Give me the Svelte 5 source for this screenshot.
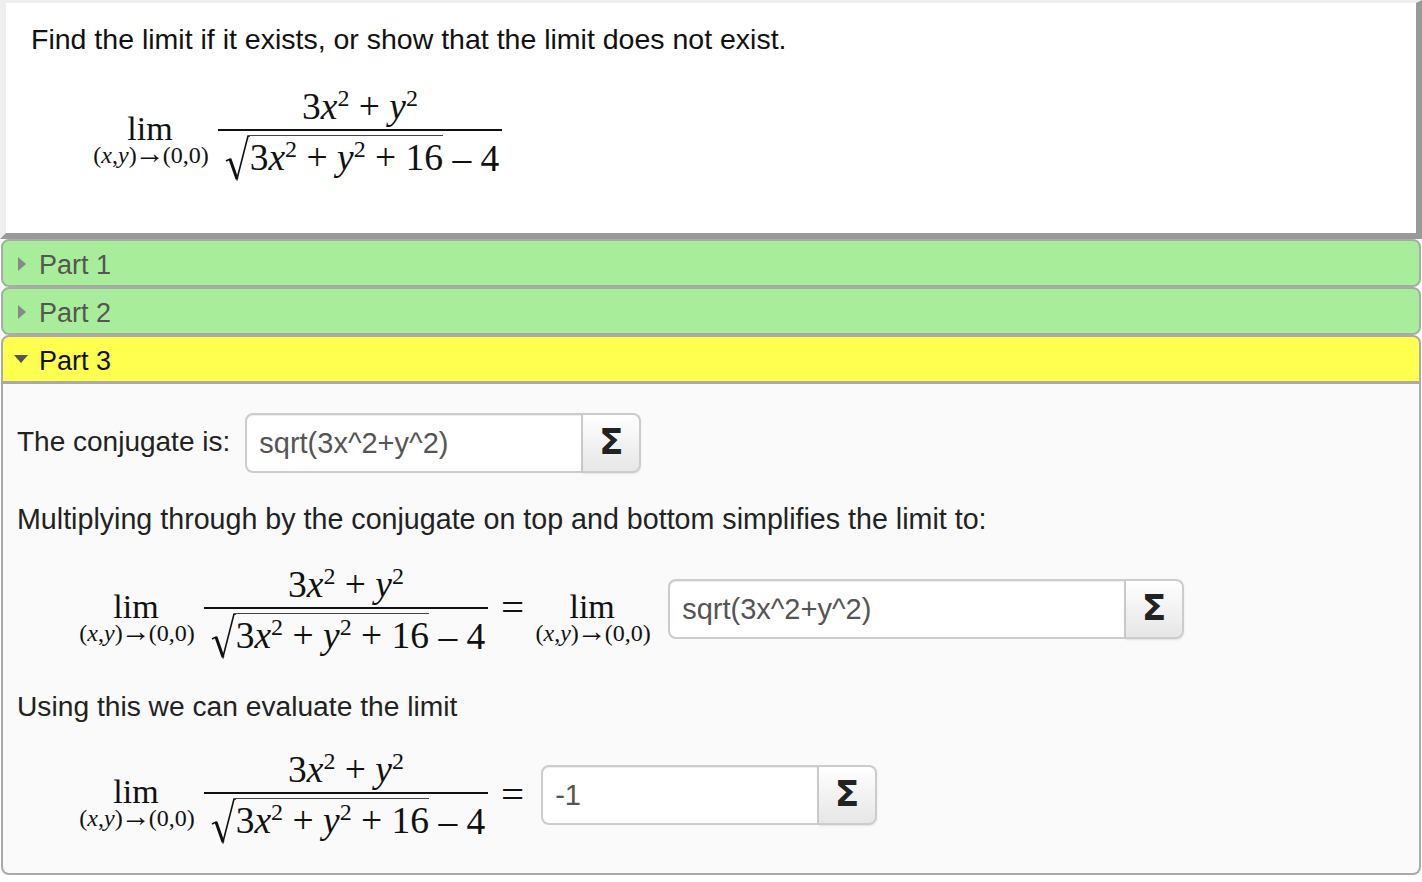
<script>
  // Homework question: a limit problem with collapsible parts, Part 3 is open.
  let parts = [
    { name: 'Part 1', state: 'done' },
    { name: 'Part 2', state: 'done' },
  ]
  let conjugate = $state('sqrt(3x^2+y^2)')
  let answer = $state('-1')
</script>

{#snippet lim()}
  <span class="lim">
    <span class="lim-word">lim</span>
    <span class="lim-under">(<i>x</i>,<i>y</i>)<span class="arrow">→</span>(0,0)</span>
  </span>
{/snippet}

{#snippet expr()}
  <span class="expr">3<i>x</i><sup>2</sup> + <i>y</i><sup>2</sup></span>
{/snippet}

{#snippet frac()}
  <span class="frac">
    <span class="num">{@render expr()}</span>
    <span class="den">
      <svg class="radical" width="25" height="46" viewBox="0 0 25 46">
        <path d="M1 26 L5 24 L12 44 L23 1 L25 1" fill="none" stroke="#111" stroke-width="1.600" />
        <path d="M5 24 L12 44" fill="none" stroke="#111" stroke-width="3" />
      </svg>
      <span class="under">{@render expr()} + 16</span>
      <span class="rest">&nbsp;– 4</span>
    </span>
  </span>
{/snippet}

{#snippet mathInput(value, cls)}
  <span class="group {cls}">
    <input class="field" {value} readonly />
    <button class="sigma">Σ</button>
  </span>
{/snippet}

<div class="page">
  <div class="question">
    <p class="prompt">Find the limit if it exists, or show that the limit does not exist.</p>
    <div class="math first">
      {@render lim()}
      {@render frac()}
    </div>
  </div>

  {#each parts as p}
    <div class="part done">
      <span class="tri right"></span>
      <span>{p.name}</span>
    </div>
  {/each}

  <div class="part open">
    <span class="tri down"></span>
    <span>Part 3</span>
  </div>
  <div class="body">
    <div class="row conj">
      <span class="label">The conjugate is:</span>
      {@render mathInput(conjugate, 'w-conj')}
    </div>
    <p class="line multiply">Multiplying through by the conjugate on top and bottom simplifies the limit to:</p>
    <div class="math second">
      {@render lim()}
      {@render frac()}
      <span class="eq">=</span>
      {@render lim()}
      {@render mathInput(conjugate, 'w-long')}
    </div>
    <p class="line using">Using this we can evaluate the limit</p>
    <div class="math third">
      {@render lim()}
      {@render frac()}
      <span class="eq">=</span>
      {@render mathInput(answer, 'w-ans')}
    </div>
  </div>
</div>

<style>
  :global(body) {
    margin: 0;
    background: #fff;
  }
  .page {
    width: 1422px;
    height: 882px;
    box-sizing: border-box;
    font-family: 'Liberation Sans', Arial, sans-serif;
    font-size: 28px;
    color: #222;
  }
  .question {
    height: 239px;
    box-sizing: border-box;
    border-style: solid;
    border-color: #eee #999 #999 #eee;
    border-width: 3px 6px 6px 6px;
    padding: 20px 25px 0;
    background: #fff;
  }
  .prompt {
    margin: 0;
    line-height: 32px;
    color: #111;
    font-size: 28.500px;
  }
  .math {
    display: flex;
    align-items: flex-start;
    font-family: 'Liberation Serif', 'Times New Roman', serif;
    font-size: 37.500px;
    color: #111;
  }
  .first {
    margin: 30px 0 0 63px;
  }
  .lim {
    display: flex;
    flex-direction: column;
    align-items: center;
    width: 114px;
    margin: 28px 10px 0 0;
    font-size: 34px;
    line-height: 31px;
    white-space: nowrap;
  }
  .lim-word {
    margin-left: -2px;
  }
  .lim-under {
    font-size: 24px;
    line-height: 22px;
  }
  .arrow {
    font-size: 30px;
    line-height: 0;
    margin: 0 -2px;
  }
  .frac {
    display: flex;
    flex-direction: column;
    align-items: center;
    width: 284px;
    white-space: nowrap;
  }
  .num {
    border-bottom: 2px solid #111;
    width: 100%;
    text-align: center;
    height: 44px;
    line-height: 44px;
  }
  .den {
    display: flex;
    align-items: flex-start;
    height: 52px;
    line-height: 44px;
    margin: 4px 0 0 4px;
  }
  .radical {
    flex: none;
  }
  .under {
    border-top: 1px solid #444;
    line-height: 44px;
    height: 44px;
  }
  .rest {
    margin-top: 2px;
  }
  sup {
    font-size: 24px;
    line-height: 0;
    vertical-align: 13px;
  }
  .body {
    height: 491px;
    box-sizing: border-box;
    background: #fafafa;
    border: 2px solid #aaa;
    border-top: 0;
    border-radius: 0 0 8px 8px;
    padding: 29px 14px 0;
    margin: 0 1px;
    color: #222;
  }
  .part {
    height: 48px;
    box-sizing: border-box;
    display: flex;
    align-items: center;
    border: 2px solid #aaa;
    border-radius: 8px;
    padding: 5px 0 0 36px;
    position: relative;
    margin: 0 1px;
    font-size: 27px;
  }
  .done {
    background: #a7ed9a;
    color: #555;
  }
  .open {
    height: 49px;
    background: #ffff4f;
    color: #111;
    border-radius: 8px 8px 0 0;
    border-bottom-width: 3px;
  }
  .tri {
    position: absolute;
    width: 0;
    height: 0;
    border-style: solid;
    border-color: transparent;
  }
  .tri.right {
    left: 15px;
    top: 16px;
    border-width: 7px 0 7px 8px;
    border-left-color: #888;
  }
  .tri.down {
    left: 11px;
    top: 18px;
    border-width: 8px 7px 0 7px;
    border-top-color: #555;
  }
  .row {
    display: flex;
    align-items: center;
    gap: 15px;
    height: 60px;
  }
  .label {
    margin-top: -2px;
  }
  .line {
    margin: 0;
    line-height: 32px;
  }
  .multiply {
    margin-top: 30px;
    font-size: 28.650px;
  }
  .second {
    margin: 28px 0 0 63px;
  }
  .using {
    margin-top: 25px;
    font-size: 28.200px;
  }
  .third {
    margin: 26px 0 0 63px;
  }
  .eq {
    margin: 22px 12px 0 13px;
    line-height: 44px;
    font-size: 41px;
  }
  .third .eq {
    margin-top: 24px;
  }
  .group {
    display: flex;
    height: 60px;
    box-sizing: border-box;
    border-radius: 8px;
  }
  .second .group {
    margin: 16px 0 0 8px;
  }
  .third .group {
    margin: 17px 0 0 5px;
  }
  .w-conj {
    width: 396px;
  }
  .w-long {
    width: 516px;
  }
  .w-ans {
    width: 336px;
  }
  .field {
    flex: 1;
    min-width: 0;
    box-sizing: border-box;
    border: 2px solid #ccc;
    border-radius: 8px 0 0 8px;
    background: #fff;
    padding: 0 12px;
    font: inherit;
    font-family: 'Liberation Sans', Arial, sans-serif;
    font-size: 29px;
    color: #555;
    box-shadow: inset 0 1px 1px rgba(0, 0, 0, 0.08);
    outline: none;
  }
  .sigma {
    width: 58px;
    flex: none;
    box-sizing: border-box;
    border: 2px solid #ccc;
    border-left: 0;
    border-radius: 0 8px 8px 0;
    background: linear-gradient(#fff, #e6e6e6);
    font-family: 'DejaVu Sans', sans-serif;
    font-weight: 700;
    font-size: 36px;
    line-height: 50px;
    color: #222;
    padding: 0 0 2px;
    box-shadow: 0 1px 2px rgba(0, 0, 0, 0.1);
  }
</style>
